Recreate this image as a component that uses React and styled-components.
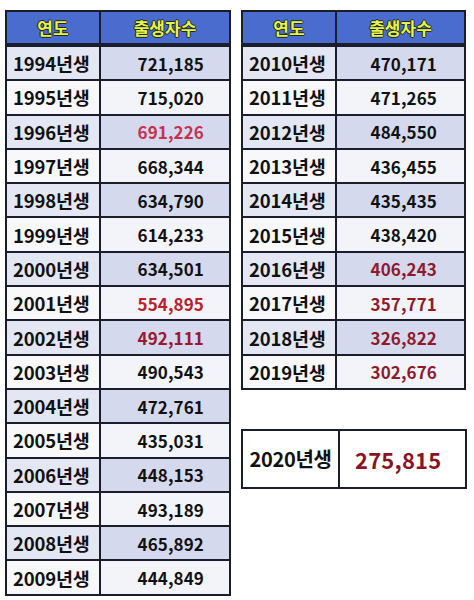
import React from "react";
import styled, { createGlobalStyle } from "styled-components";

const GlobalStyle = createGlobalStyle`
  html, body {
    margin: 0;
    padding: 0;
    background: #ffffff;
  }
  body {
    font-family: "Noto Sans CJK KR", "Noto Sans", sans-serif;
  }
`;

const Page = styled.div`
  width: 474px;
  height: 600px;
  display: flex;
  align-items: flex-start;
  gap: 10px;
  padding: 10px 0 0 5px;
  box-sizing: border-box;
  background: #ffffff;
`;

const Column = styled.div`
  display: flex;
  flex-direction: column;
  gap: 39px;
`;

const Table = styled.div`
  width: ${(props) => props.width}px;
  display: grid;
  grid-template-columns: 92px 1fr;
  border: 2px solid #1b1d2b;
  box-sizing: border-box;
`;

const HeadCell = styled.div`
  height: 31px;
  display: flex;
  align-items: center;
  justify-content: center;
  background: #4a6ccf;
  border-bottom: 2px solid #1b1d2b;
  border-left: ${(props) => (props.first ? "none" : "2px solid #1b1d2b")};
  color: #e6f24e;
  font-weight: 700;
  font-size: 17px;
  text-shadow: -1px 0 0 #1f2a14, 1px 0 0 #1f2a14, 0 1px 0 #1f2a14,
    0 -1px 0 #1f2a14;
`;

const YearCell = styled.div`
  height: 32.3px;
  display: flex;
  align-items: center;
  padding-left: 6px;
  background: ${(props) => (props.tint ? "#e3e6f3" : "#f8f8fb")};
  border-top: ${(props) => (props.top ? "none" : "2px solid #1b1d2b")};
  color: #111111;
  font-weight: 700;
  font-size: 18.5px;
  letter-spacing: -0.2px;
`;

const CountCell = styled.div`
  height: 32.3px;
  display: flex;
  align-items: center;
  justify-content: flex-end;
  padding-right: ${(props) => props.pad}px;
  background: ${(props) => (props.tint ? "#d4d9ee" : "#f3f4f9")};
  border-top: ${(props) => (props.top ? "none" : "2px solid #1b1d2b")};
  border-left: 2px solid #1b1d2b;
  color: ${(props) => props.color || "#111111"};
  font-weight: 700;
  font-size: 17px;
  letter-spacing: 0.1px;
`;

const Highlight = styled.div`
  width: 226px;
  height: 60px;
  display: grid;
  grid-template-columns: 97px 1fr;
  border: 2px solid #1b1d2b;
  box-sizing: border-box;
`;

const HighlightYear = styled.div`
  display: flex;
  align-items: center;
  justify-content: center;
  font-weight: 700;
  font-size: 20px;
  letter-spacing: -0.3px;
  color: #111111;
  border-right: 2px solid #1b1d2b;
`;

const HighlightCount = styled.div`
  display: flex;
  align-items: center;
  padding-left: 15px;
  font-weight: 700;
  font-size: 22px;
  color: #8a1424;
  letter-spacing: 0.2px;
`;

const left = [
  ["1994", "721,185"],
  ["1995", "715,020"],
  ["1996", "691,226", "#c8324f"],
  ["1997", "668,344"],
  ["1998", "634,790"],
  ["1999", "614,233"],
  ["2000", "634,501"],
  ["2001", "554,895", "#b8202c"],
  ["2002", "492,111", "#9a1830"],
  ["2003", "490,543"],
  ["2004", "472,761"],
  ["2005", "435,031"],
  ["2006", "448,153"],
  ["2007", "493,189"],
  ["2008", "465,892"],
  ["2009", "444,849"],
];

const right = [
  ["2010", "470,171"],
  ["2011", "471,265"],
  ["2012", "484,550"],
  ["2013", "436,455"],
  ["2014", "435,435"],
  ["2015", "438,420"],
  ["2016", "406,243", "#8e1a2c"],
  ["2017", "357,771", "#8e1a2c"],
  ["2018", "326,822", "#8e1a2c"],
  ["2019", "302,676", "#8e1a2c"],
];

const BirthTable = ({ rows, width, pad }) => (
  <Table width={width}>
    <HeadCell first>연도</HeadCell>
    <HeadCell>출생자수</HeadCell>
    {rows.map(([year, count, color], i) => (
      <React.Fragment key={year}>
        <YearCell tint={i % 2 === 0}>{year}년생</YearCell>
        <CountCell tint={i % 2 === 0} color={color} pad={pad}>
          {count}
        </CountCell>
      </React.Fragment>
    ))}
  </Table>
);

const App = () => (
  <>
    <GlobalStyle />
    <Page>
      <BirthTable rows={left} width={226} pad={25} />
      <Column>
        <BirthTable rows={right} width={225} pad={27} />
        <Highlight>
          <HighlightYear>2020년생</HighlightYear>
          <HighlightCount>275,815</HighlightCount>
        </Highlight>
      </Column>
    </Page>
  </>
);

export default App;
